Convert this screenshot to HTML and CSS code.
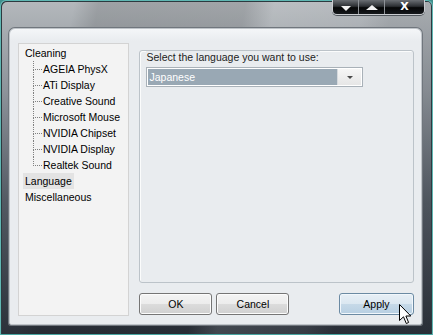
FILE: index.html
```html
<!DOCTYPE html>
<html lang="en">
<head>
    <meta charset="UTF-8">
    <title>Settings</title>
    <link rel="stylesheet" href="styles.css">
</head>
<body>
    <div class="window">
        <!-- Title bar with caption buttons -->
        <div class="titlebar">
            <div class="caption-buttons">
                <span class="cap cap-min"><span class="tri-down"></span></span>
                <span class="cap cap-max"><span class="tri-up"></span></span>
                <span class="cap cap-close">X</span>
            </div>
        </div>

        <div class="client">
            <!-- Category tree -->
            <div class="tree">
                <div class="node"><span class="label">Cleaning</span></div>
                <div class="children">
                    <div class="child"><span class="label">AGEIA PhysX</span></div>
                    <div class="child"><span class="label">ATi Display</span></div>
                    <div class="child"><span class="label">Creative Sound</span></div>
                    <div class="child"><span class="label">Microsoft Mouse</span></div>
                    <div class="child"><span class="label">NVIDIA Chipset</span></div>
                    <div class="child"><span class="label">NVIDIA Display</span></div>
                    <div class="child last"><span class="label">Realtek Sound</span></div>
                </div>
                <div class="node"><span class="label selected">Language</span></div>
                <div class="node"><span class="label">Miscellaneous</span></div>
            </div>

            <div class="content">
                <div class="group">
                    <span class="group-title">Select the language you want to use:</span>
                    <div class="combo">
                        <span class="combo-value">Japanese</span>
                        <span class="combo-arrow"><span class="tri-small"></span></span>
                    </div>
                </div>

                <div class="buttons">
                    <button class="btn">OK</button>
                    <button class="btn">Cancel</button>
                    <button class="btn btn-hover">Apply</button>
                </div>
            </div>
        </div>

        <!-- Mouse pointer over Apply -->
        <svg class="cursor" width="13" height="21" viewBox="0 0 13 21">
            <path d="M0.5 0.5 L0.5 16.5 L4.5 12.8 L7.3 19.5 L9.6 18.5 L6.9 12 L11.8 12 Z" fill="#fff" stroke="#000" stroke-width="1" stroke-linejoin="round"/>
        </svg>
    </div>
</body>
</html>
```

FILE: styles.css
```css
/* Page reset */
body {
    margin: 0;
    background: #3f8f8c;
    font-family: "Liberation Sans", Arial, sans-serif;
    font-size: 10.5px;
    color: #000;
}

/* Window frame */
.window {
    position: relative;
    width: 433px;
    height: 335px;
    box-sizing: border-box;
    border: 1px solid #5fb7b3;
    border-bottom-color: #49a6a2;
    border-radius: 6px 6px 0 0;
    padding: 0 10px 9px 8px;
    display: flex;
    flex-direction: column;
    background:
        linear-gradient(100deg, rgba(255,255,255,0) 15%, rgba(0,0,0,0.12) 20%, rgba(0,0,0,0.1) 50%, rgba(255,255,255,0.1) 56%, rgba(255,255,255,0.05) 74%, rgba(0,0,0,0.06) 80%),
        linear-gradient(to bottom, #b4b8bc 0, #a6abb0 30px, #8d939a 90px, #535a63 200px, #2b313a 100%);
    box-shadow: inset 1px 1px 0 #2d3a40, inset -1px 0 0 #2d3a40;
}

.titlebar {
    height: 29px;
    display: flex;
    justify-content: flex-end;
    align-items: flex-start;
}

.caption-buttons {
    display: flex;
    height: 14px;
    margin-top: -1px;
    margin-right: -3px;
    border: 1px solid #c9ccd0;
    border-top: none;
    border-radius: 0 0 5px 5px;
    overflow: hidden;
    box-shadow: 0 1px 0 #50565c;
}

.cap {
    display: flex;
    align-items: center;
    justify-content: center;
    width: 25px;
    background: linear-gradient(to bottom, #6a6e73 0, #2c2f33 45%, #050607 55%, #16191c 100%);
    border-right: 1px solid #8e9297;
}

.cap-close {
    width: 39px;
    border-right: none;
    color: #fff;
    font-family: "DejaVu Sans", sans-serif;
    font-weight: bold;
    font-size: 11px;
    line-height: 14px;
}

.tri-down {
    width: 0;
    height: 0;
    border-left: 5px solid transparent;
    border-right: 5px solid transparent;
    border-top: 5px solid #f2f2f2;
    margin-top: 2px;
}

.tri-up {
    width: 0;
    height: 0;
    border-left: 6px solid transparent;
    border-right: 6px solid transparent;
    border-bottom: 5px solid #f2f2f2;
}

/* Client area */
.client {
    flex: 1;
    display: flex;
    align-items: flex-start;
    padding: 14px 7px 8px 8px;
    background: linear-gradient(to bottom, #f4f6f8 0, #e9ecef 12px, #e9ecef 100%);
    border: 1px solid #bfc4c9;
    border-radius: 6px 6px 2px 2px;
    box-shadow: 0 0 0 1px #70767d;
}

/* Tree view */
.tree {
    width: 112px;
    height: 273px;
    box-sizing: border-box;
    padding: 1px 4px;
    background: #f3f3f3;
    border: 1px solid #d3d3d3;
}

.node,
.child {
    height: 16px;
    line-height: 16px;
    white-space: nowrap;
}

.label {
    display: inline-block;
    padding: 0 2px;
}

.selected {
    background: #e3e3e3;
}

.child {
    position: relative;
    padding-left: 18px;
}

/* Dotted connector lines */
.child::before {
    content: "";
    position: absolute;
    left: 10px;
    top: 0;
    width: 8px;
    height: 8px;
    border-left: 1px dotted #808080;
    border-bottom: 1px dotted #808080;
}

.child::after {
    content: "";
    position: absolute;
    left: 10px;
    top: 8px;
    height: 8px;
    border-left: 1px dotted #808080;
}

.child.last::after {
    display: none;
}

/* Right hand side */
.content {
    width: 276px;
    margin-left: 10px;
    margin-top: 7px;
    display: flex;
    flex-direction: column;
}

.group {
    height: 233px;
    box-sizing: border-box;
    border: 1px solid #bcc3c9;
    border-radius: 3px;
    padding: 0 6px;
    box-shadow: inset 1px 1px 0 #fbfcfc;
}

.group-title {
    display: inline-block;
    line-height: 13px;
    margin-top: -3px;
    padding-right: 1px;
    background: #e9ecef;
    color: #222;
}

.combo {
    display: flex;
    width: 217px;
    height: 20px;
    box-sizing: border-box;
    margin-top: 3px;
    border: 1px solid #a9b1b8;
    background: #fff;
    padding: 1px;
}

.combo-value {
    flex: 1;
    background: #99a8b4;
    color: #fff;
    line-height: 16px;
    padding-left: 1px;
}

.combo-arrow {
    width: 23px;
    display: flex;
    align-items: center;
    justify-content: center;
    background: linear-gradient(to bottom, #f6f6f6, #e6e6e6);
    border-left: 1px solid #d5d9dd;
}

.tri-small {
    width: 0;
    height: 0;
    border-left: 3px solid transparent;
    border-right: 3px solid transparent;
    border-top: 3px solid #4a4a4a;
}

/* Dialog buttons */
.buttons {
    display: flex;
    margin-top: 10px;
}

.btn {
    width: 73px;
    height: 22px;
    margin-right: 4px;
    padding: 0;
    font-family: "Liberation Sans", Arial, sans-serif;
    font-size: 10.5px;
    color: #000;
    border: 1px solid #757575;
    border-radius: 3px;
    background: linear-gradient(to bottom, #f4f4f4 0, #ececec 50%, #dcdcdc 50%, #d0d0d0 100%);
    box-shadow: inset 0 0 0 1px #fcfcfc;
}

.btn-hover {
    width: 75px;
    margin-left: auto;
    margin-right: 0;
    border-color: #6b8aa3;
    background: linear-gradient(to bottom, #e7eff6 0, #dbe7f1 50%, #c6d9e8 50%, #b7cfe2 100%);
    box-shadow: inset 0 0 0 1px #f1f7fc;
}

/* Pointer overlay */
.cursor {
    position: absolute;
    left: 398px;
    top: 303px;
}
```
